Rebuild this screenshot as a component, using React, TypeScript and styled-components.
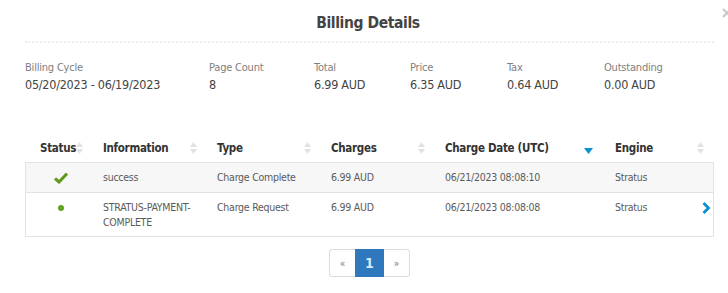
import styled, { createGlobalStyle } from "styled-components";

const GlobalStyle = createGlobalStyle`
  html, body {
    margin: 0;
    padding: 0;
    background: #ffffff;
  }
  body {
    font-family: "Liberation Sans Narrow", "DejaVu Sans Condensed", "Liberation Sans", sans-serif;
    color: #555;
  }
`;

interface IColumn {
  title: string;
  width: number;
  sort: "none" | "desc";
}

interface IRow {
  status: "done" | "pending";
  info: string;
  type: string;
  charges: string;
  date: string;
  engine: string;
  expandable: boolean;
}

const summary = [
  { label: "Billing Cycle", value: "05/20/2023 - 06/19/2023" },
  { label: "Page Count", value: "8" },
  { label: "Total", value: "6.99 AUD" },
  { label: "Price", value: "6.35 AUD" },
  { label: "Tax", value: "0.64 AUD" },
  { label: "Outstanding", value: "0.00 AUD" },
];

const columns: IColumn[] = [
  { title: "Status", width: 68, sort: "none" },
  { title: "Information", width: 114, sort: "none" },
  { title: "Type", width: 114, sort: "none" },
  { title: "Charges", width: 114, sort: "none" },
  { title: "Charge Date (UTC)", width: 170, sort: "desc" },
  { title: "Engine", width: 109, sort: "none" },
];

const rows: IRow[] = [
  {
    status: "done",
    info: "success",
    type: "Charge Complete",
    charges: "6.99 AUD",
    date: "06/21/2023 08:08:10",
    engine: "Stratus",
    expandable: false,
  },
  {
    status: "pending",
    info: "STRATUS-PAYMENT-COMPLETE",
    type: "Charge Request",
    charges: "6.99 AUD",
    date: "06/21/2023 08:08:08",
    engine: "Stratus",
    expandable: true,
  },
];

const gridCols = columns.map((c) => `${c.width}px`).join(" ");

const SortIcon = ({ sort }: { sort: "none" | "desc" }) =>
  sort === "desc" ? (
    <ActiveSort width="9" height="7" viewBox="0 0 9 7">
      <path d="M0 0 L9 0 L4.5 6 Z" fill="#0a8fcf" />
    </ActiveSort>
  ) : (
    <IdleSort width="7" height="12" viewBox="0 0 7 12">
      <path d="M3.5 0 L7 5 L0 5 Z" fill="#e2e2e2" />
      <path d="M0 7 L7 7 L3.5 12 Z" fill="#e2e2e2" />
    </IdleSort>
  );

const App = () => {
  return (
    <>
      <GlobalStyle />
      <Modal>
        <CloseMark width="10" height="10" viewBox="0 0 10 10">
          <path d="M1 1 L9 9 M9 1 L1 9" stroke="#c8c8c8" strokeWidth="2" />
        </CloseMark>
        <Title>Billing Details</Title>
        <Divider />
        <Summary>
          {summary.map((s) => (
            <SummaryItem key={s.label}>
              <Label>{s.label}</Label>
              <Value>{s.value}</Value>
            </SummaryItem>
          ))}
        </Summary>

        <Table>
          <HeaderRow>
            {columns.map((c, i) => (
              <HeaderCell key={c.title} first={i === 0}>
                <span>{c.title}</span>
                <SortIcon sort={c.sort} />
              </HeaderCell>
            ))}
          </HeaderRow>
          <Body>
            {rows.map((r, i) => (
              <Row key={r.date} striped={i === 0} tall={r.info.length > 20}>
                <StatusCell>
                  {r.status === "done" ? (
                    <svg width="14" height="12" viewBox="0 0 14 12">
                      <path
                        d="M1 6.5 L5 10 L13 1.5"
                        stroke="#5f9a1e"
                        strokeWidth="3"
                        fill="none"
                        strokeLinejoin="miter"
                      />
                    </svg>
                  ) : (
                    <Dot />
                  )}
                </StatusCell>
                <Cell>{r.info}</Cell>
                <Cell>{r.type}</Cell>
                <Cell>{r.charges}</Cell>
                <Cell>{r.date}</Cell>
                <Cell>
                  {r.engine}
                  {r.expandable && (
                    <Chevron width="9" height="12" viewBox="0 0 9 12">
                      <path
                        d="M1.5 1 L6.5 6 L1.5 11"
                        stroke="#0a8fcf"
                        strokeWidth="2.8"
                        fill="none"
                      />
                    </Chevron>
                  )}
                </Cell>
              </Row>
            ))}
          </Body>
        </Table>

        <Pager>
          <PageButton>«</PageButton>
          <PageButton active>1</PageButton>
          <PageButton>»</PageButton>
        </Pager>
      </Modal>
    </>
  );
};

export default App;

const Modal = styled.div`
  position: relative;
  width: 728px;
  height: 293px;
  box-sizing: border-box;
  padding: 13px 14px 0 25px;
  overflow: hidden;
  background: #fff;
`;

const CloseMark = styled.svg`
  position: absolute;
  top: 8px;
  right: -4px;
`;

const Title = styled.h2`
  margin: 0;
  text-align: center;
  font-size: 15.5px;
  letter-spacing: -0.4px;
  font-weight: bold;
  color: #444;
  line-height: 20px;
  padding-right: 3px;
`;

const Divider = styled.div`
  margin-top: 8px;
  border-top: 2px dotted #eeeeee;
`;

const Summary = styled.div`
  display: grid;
  grid-template-columns: 184px 105px 96px 97px 97px 1fr;
  margin-top: 17px;
`;

const SummaryItem = styled.div`
  display: flex;
  flex-direction: column;
`;

const Label = styled.span`
  font-size: 11px;
  letter-spacing: -0.2px;
  line-height: 16px;
  color: #808080;
`;

const Value = styled.span`
  font-size: 12.5px;
  letter-spacing: -0.25px;
  line-height: 18px;
  color: #444;
`;

const Table = styled.div`
  margin-top: 39px;
  width: 689px;
`;

const HeaderRow = styled.div`
  display: grid;
  grid-template-columns: ${gridCols};
  height: 29px;
  align-items: center;
`;

const HeaderCell = styled.div<{ first: boolean }>`
  display: flex;
  align-items: center;
  justify-content: space-between;
  padding: 0 10px 0 ${(p) => (p.first ? "15px" : "10px")};
  font-size: 11.5px;
  letter-spacing: -0.3px;
  font-weight: bold;
  color: #333;
`;

const IdleSort = styled.svg`
  flex-shrink: 0;
`;

const ActiveSort = styled.svg`
  flex-shrink: 0;
  margin-top: 8px;
  margin-right: 2px;
`;

const Body = styled.div`
  border: 1px solid #e3e3e3;
`;

const Row = styled.div<{ striped: boolean; tall: boolean }>`
  display: grid;
  grid-template-columns: 67px 114px 114px 114px 170px 108px;
  min-height: ${(p) => (p.tall ? "43px" : "29px")};
  background: ${(p) => (p.striped ? "#f7f7f7" : "#fff")};
  border-top: ${(p) => (p.striped ? "none" : "1px solid #e3e3e3")};
  align-items: start;
`;

const Cell = styled.div`
  position: relative;
  padding: 7px 10px 6px;
  font-size: 10.5px;
  letter-spacing: -0.25px;
  line-height: 15px;
  color: #5a5a5a;
`;

const StatusCell = styled.div`
  display: flex;
  justify-content: center;
  align-items: center;
  height: 29px;
  padding-left: 2px;
`;

const Dot = styled.span`
  width: 6px;
  height: 6px;
  border-radius: 50%;
  background: #66a021;
`;

const Chevron = styled.svg`
  position: absolute;
  right: 2px;
  top: 9px;
`;

const Pager = styled.div`
  display: flex;
  justify-content: center;
  margin-top: 12px;
  padding-left: 0px;
`;

const PageButton = styled.span<{ active?: boolean }>`
  display: flex;
  align-items: center;
  justify-content: center;
  width: ${(p) => (p.active ? "29px" : "26px")};
  height: 28px;
  box-sizing: border-box;
  font-size: ${(p) => (p.active ? "14px" : "10px")};
  font-weight: ${(p) => (p.active ? "bold" : "normal")};
  color: ${(p) => (p.active ? "#d5eafc" : "#777")};
  background: ${(p) => (p.active ? "#2f78bd" : "#fff")};
  border: 1px solid ${(p) => (p.active ? "#2f78bd" : "#dddddd")};
  &:first-child {
    border-radius: 3px 0 0 3px;
    border-right: none;
  }
  &:last-child {
    border-radius: 0 3px 3px 0;
    border-left: none;
  }
`;
